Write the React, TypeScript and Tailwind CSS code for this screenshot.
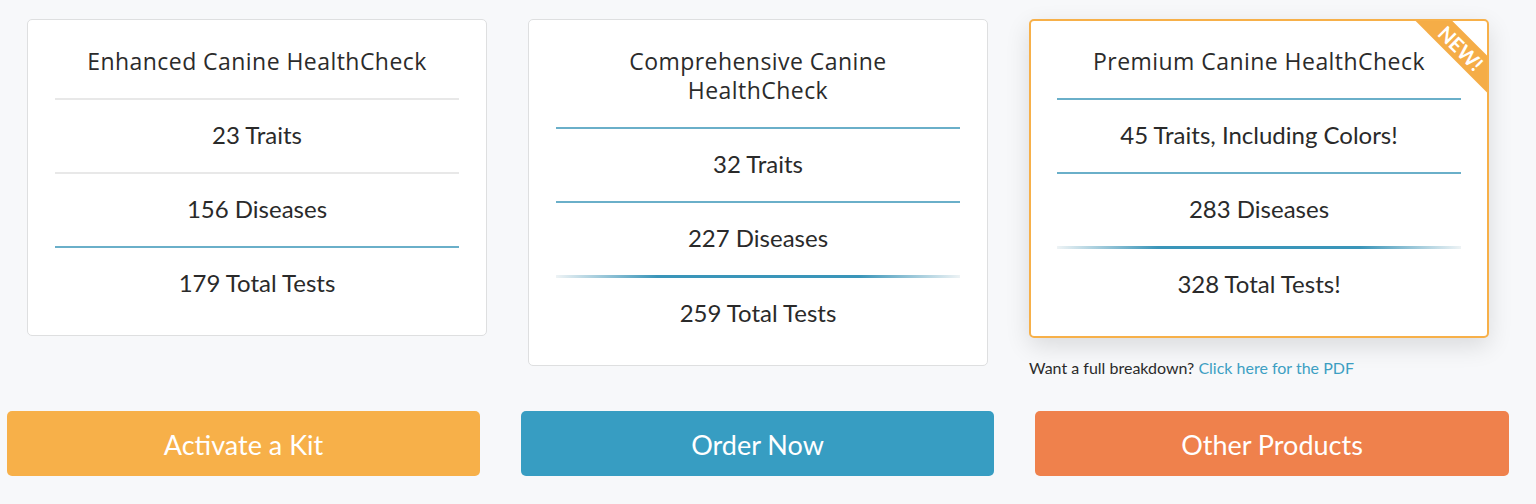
type Divider = "gray" | "blue" | "fade";

type Plan = {
  title: string[];
  rows: string[];
  dividers: Divider[];
  featured?: boolean;
};

const plans: Plan[] = [
  {
    title: ["Enhanced Canine HealthCheck"],
    rows: ["23 Traits", "156 Diseases", "179 Total Tests"],
    dividers: ["gray", "gray", "blue"],
  },
  {
    title: ["Comprehensive Canine", "HealthCheck"],
    rows: ["32 Traits", "227 Diseases", "259 Total Tests"],
    dividers: ["blue", "blue", "fade"],
  },
  {
    title: ["Premium Canine HealthCheck"],
    rows: ["45 Traits, Including Colors!", "283 Diseases", "328 Total Tests!"],
    dividers: ["blue", "blue", "fade"],
    featured: true,
  },
];

function Line({ kind }: { kind: Divider }) {
  if (kind === "gray") return <div className="h-[2px] bg-[#e8e8e8]" />;
  if (kind === "blue") return <div className="h-[2px] bg-[#6aafc9]" />;
  return (
    <div className="h-[3px] bg-[linear-gradient(to_right,#eef3f5_0%,#3a95b9_25%,#3a95b9_75%,#eef3f5_100%)]" />
  );
}

function Card({ plan }: { plan: Plan }) {
  return (
    <div
      className={
        plan.featured
          ? "relative overflow-hidden rounded-[5px] border-2 border-[#f7b049] bg-white px-[26px] pb-[15px] shadow-[0_8px_24px_rgba(0,0,0,0.12)]"
          : "relative overflow-hidden rounded-[5px] border border-[#dedfe0] bg-white px-[27px] pb-[15px]"
      }
    >
      {plan.featured && (
        <div className="absolute right-[-34px] top-[14px] flex h-[26px] w-[120px] rotate-45 items-center justify-center bg-[#f5ad47] font-['Lato'] text-[20px] font-bold text-white">
          NEW!
        </div>
      )}
      <div
        className={
          plan.featured
            ? "pt-[26px] pb-[22px] text-center font-['Open_Sans'] text-[23px] leading-[29px] tracking-[0.45px] text-[#2b2b2b]"
            : "pt-[27px] pb-[22px] text-center font-['Open_Sans'] text-[23px] leading-[29px] tracking-[0.45px] text-[#2b2b2b]"
        }
      >
        {plan.title.map((t) => (
          <div key={t}>{t}</div>
        ))}
      </div>
      {plan.rows.map((r, i) => (
        <div key={r}>
          <Line kind={plan.dividers[i]} />
          <div className="flex h-[72px] items-center justify-center pb-[2px] font-['Lato'] text-[24px] text-[#2a2a2a]">
            {r}
          </div>
        </div>
      ))}
    </div>
  );
}

export default function App() {
  return (
    <div className="min-h-[504px] bg-[#f7f8fa] pt-[19px]">
      <div className="grid grid-cols-[460px_460px_460px] items-start gap-[41px] pl-[27px]">
        <Card plan={plans[0]} />
        <Card plan={plans[1]} />
        <div>
          <Card plan={plans[2]} />
          <p className="mt-[19px] font-['Lato'] text-[16px] leading-[22px] text-[#2b2b2b]">
            Want a full breakdown?{" "}
            <a href="#" className="text-[#3d9fc3]">
              Click here for the PDF
            </a>
          </p>
        </div>
      </div>
      <div className="mt-[32px] grid grid-cols-[473px_473px_474px] gap-[41px] pl-[7px]">
        <button className="h-[65px] rounded-[5px] bg-[#f7b049] pt-[4px] font-['Lato'] text-[27px] text-white">
          Activate a Kit
        </button>
        <button className="h-[65px] rounded-[5px] bg-[#379dc2] pt-[4px] font-['Lato'] text-[27px] text-white">
          Order Now
        </button>
        <button className="h-[65px] rounded-[5px] bg-[#ef814c] pt-[4px] font-['Lato'] text-[27px] text-white">
          Other Products
        </button>
      </div>
    </div>
  );
}
